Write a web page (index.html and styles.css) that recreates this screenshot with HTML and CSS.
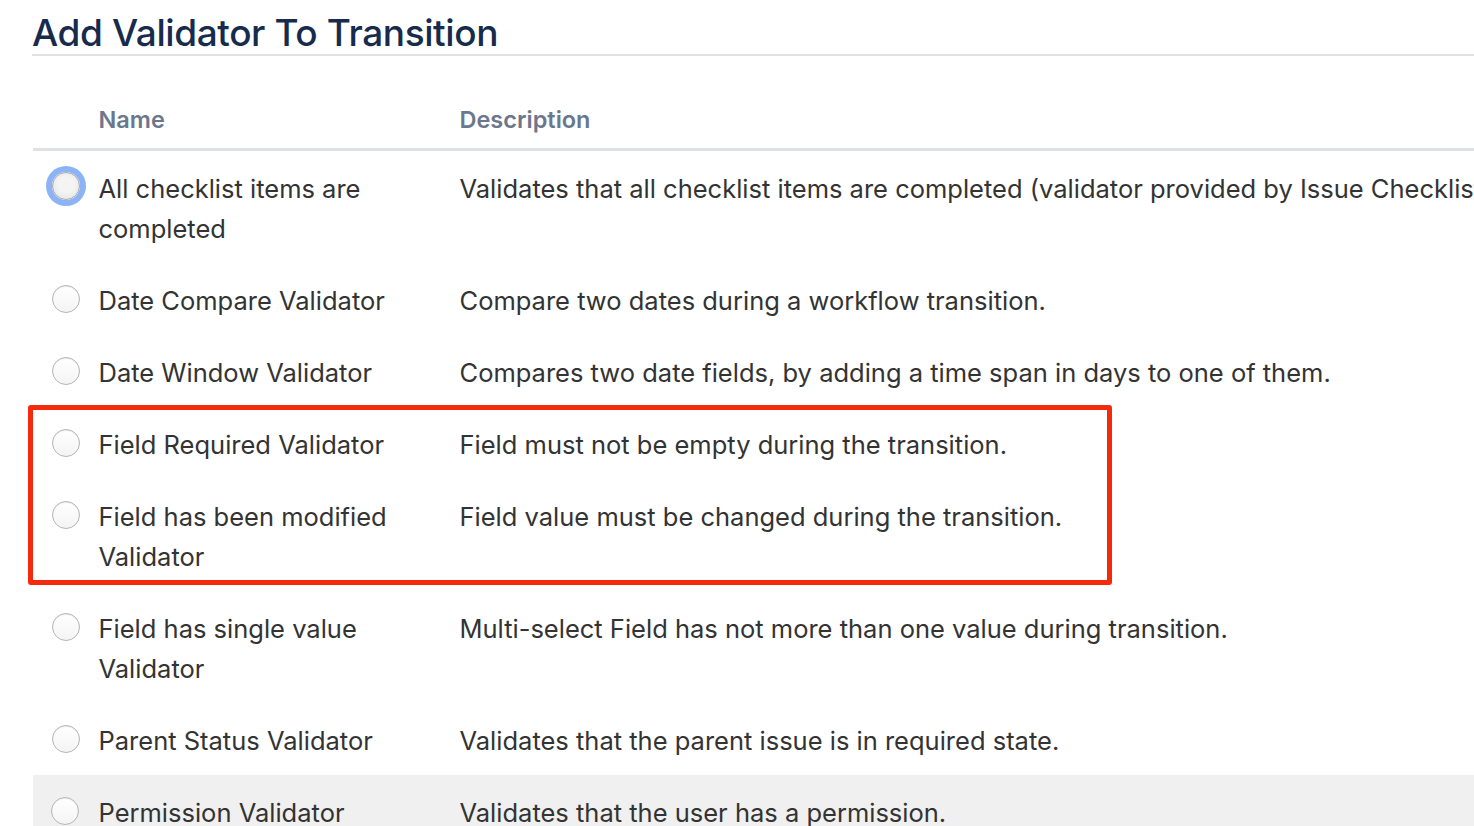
FILE: index.html
```html
<!DOCTYPE html>
<html lang="en">
<head>
<meta charset="utf-8">
<title>Add Validator To Transition</title>
<link rel="stylesheet" href="styles.css">
</head>
<body>
<main class="page">
  <h1 class="title">Add Validator To Transition</h1>
  <table class="validators">
    <thead>
      <tr>
        <th class="col-radio"></th>
        <th class="col-name">Name</th>
        <th class="col-desc">Description</th>
      </tr>
    </thead>
    <tbody>
      <tr>
        <td class="col-radio"><span class="radio radio-focus"></span></td>
        <td class="col-name">All checklist items are completed</td>
        <td class="col-desc">Validates that all checklist items are completed (validator provided by Issue Checklist)</td>
      </tr>
      <tr>
        <td class="col-radio"><span class="radio"></span></td>
        <td class="col-name">Date Compare Validator</td>
        <td class="col-desc">Compare two dates during a workflow transition.</td>
      </tr>
      <tr>
        <td class="col-radio"><span class="radio"></span></td>
        <td class="col-name">Date Window Validator</td>
        <td class="col-desc">Compares two date fields, by adding a time span in days to one of them.</td>
      </tr>
      <tr>
        <td class="col-radio"><span class="radio"></span></td>
        <td class="col-name">Field Required Validator</td>
        <td class="col-desc">Field must not be empty during the transition.</td>
      </tr>
      <tr>
        <td class="col-radio"><span class="radio"></span></td>
        <td class="col-name">Field has been modified Validator</td>
        <td class="col-desc">Field value must be changed during the transition.</td>
      </tr>
      <tr>
        <td class="col-radio"><span class="radio"></span></td>
        <td class="col-name">Field has single value Validator</td>
        <td class="col-desc">Multi-select Field has not more than one value during transition.</td>
      </tr>
      <tr>
        <td class="col-radio"><span class="radio"></span></td>
        <td class="col-name">Parent Status Validator</td>
        <td class="col-desc">Validates that the parent issue is in required state.</td>
      </tr>
      <tr class="row-hover">
        <td class="col-radio"><span class="radio"></span></td>
        <td class="col-name">Permission Validator</td>
        <td class="col-desc">Validates that the user has a permission.</td>
      </tr>
    </tbody>
  </table>
  <div class="highlight" aria-hidden="true"></div>
</main>
</body>
</html>
```
FILE: styles.css
```css
html, body {
  margin: 0;
  padding: 0;
  overflow: hidden;
  background: #ffffff;
}

body {
  font-family: "Inter", "Noto Sans", "Liberation Sans", sans-serif;
  color: #333333;
  width: 1474px;
  height: 826px;
}

.page {
  position: relative;
  padding-top: 12px;
  padding-left: 32px;
  width: 1600px;
}

.title {
  margin: 0;
  font-size: 37px;
  line-height: 42px;
  font-weight: 500;
  letter-spacing: -0.4px;
  color: #172b4d;
  border-bottom: 2px solid #dfe1e6;
}

.validators {
  border-collapse: collapse;
  border-spacing: 0;
  width: 1568px;
}

.validators th {
  text-align: left;
  font-size: 23.5px;
  line-height: 28px;
  font-weight: 600;
  color: #6b778c;
  padding: 50px 0 14px;
  border-bottom: 3px solid #dfe1e6;
}

.validators td {
  font-size: 25.5px;
  line-height: 40px;
  padding: 18px 0 14px;
  vertical-align: top;
}

.col-radio {
  width: 66px;
  padding-left: 19px !important;
  box-sizing: border-box;
}

.col-name {
  width: 361px;
  padding-right: 30px !important;
  box-sizing: border-box;
}

.col-desc {
  white-space: nowrap;
}

.row-hover td {
  background: #f0f0f0;
}

.row-hover .col-radio {
  padding-left: 18px !important;
}

.row-hover td:first-child {
  border-left: 1px solid #ffffff;
}

.radio {
  display: block;
  width: 28px;
  height: 28px;
  margin-top: 4px;
  box-sizing: border-box;
  border-radius: 50%;
  border: 1px solid #b5b5b5;
  background: linear-gradient(#ffffff, #f4f4f4);
  box-shadow: inset 0 1px 1px rgba(0, 0, 0, 0.07);
}

.radio-focus {
  margin-top: 3px;
  background: radial-gradient(circle at 50% 45%, #f4f4f4 40%, #e0e0e0 100%);
  border-color: #a9a9a9;
  box-shadow: 0 0 0 6px #8cb3f5;
}

.highlight {
  position: absolute;
  left: 28px;
  top: 405px;
  width: 1084px;
  height: 180px;
  box-sizing: border-box;
  border: 5px solid #f5290c;
  border-radius: 3px;
  pointer-events: none;
}
```
